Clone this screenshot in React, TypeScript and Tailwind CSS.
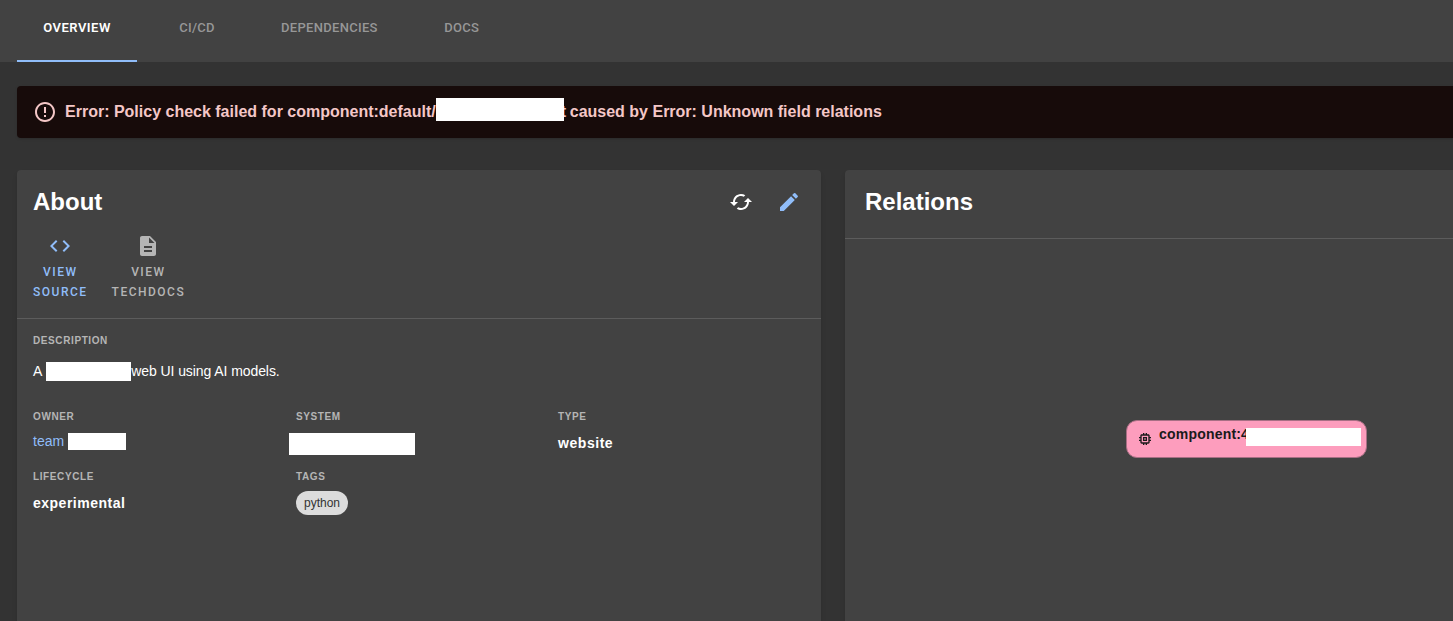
const Icon = ({ d, className }: { d: string; className: string }) => (
  <svg viewBox="0 0 24 24" className={className} fill="currentColor" aria-hidden="true">
    <path d={d} />
  </svg>
);

const Redact = ({ className }: { className: string }) => <span className={`block relative z-10 bg-white ${className}`} />;

const Label = ({ children }: { children: React.ReactNode }) => (
  <div className="text-[10px] leading-[16px] font-bold tracking-[0.6px] text-[#b5b5b5] uppercase">{children}</div>
);

const tabs = ["OVERVIEW", "CI/CD", "DEPENDENCIES", "DOCS"];

export default function App() {
  return (
    <div className="w-[1453px] h-[621px] overflow-hidden bg-[#333333] font-['Liberation_Sans',sans-serif] text-white">
      <div className="w-[1666px]">
        <div className="h-[62px] bg-[#424242] px-[17px] flex">
          {tabs.map((t, i) => (
            <div
              key={t}
              className={`min-w-[120px] px-6 h-[62px] flex items-center justify-center pb-[4px] font-['Roboto',sans-serif] text-[13px] border-b-2 ${
                i === 0
                  ? "border-[#90bdf9] text-white font-semibold tracking-[0.5px]"
                  : "border-transparent text-[#979797] font-medium tracking-[0.3px]"
              }`}
            >
              {t}
            </div>
          ))}
        </div>

        <div className="px-[17px] pt-6">
          <div className="h-[52px] rounded bg-[#170b0a] flex items-center pl-4 text-[#f4c7c7] shadow-sm">
            <Icon
              className="w-[24px] h-[24px] text-[#f4c7c7] mr-[8px]"
              d="M11 15h2v2h-2zm0-8h2v6h-2zm.99-5C6.47 2 2 6.48 2 12s4.47 10 9.99 10C17.52 22 22 17.52 22 12S17.52 2 11.99 2zM12 20c-4.42 0-8-3.58-8-8s3.58-8 8-8 8 3.58 8 8-3.58 8-8 8z"
            />
            <span className="text-[16px] font-bold leading-6">Error: Policy check failed for component:default/</span>
            <Redact className="w-[128px] h-[23px] -mt-[5px]" />
            <span className="text-[16px] font-bold leading-6 -ml-[3px]">t</span>
            <span className="text-[16px] font-bold leading-6 ml-[3.7px]">caused by Error: Unknown field relations</span>
          </div>

          <div className="mt-8 grid grid-cols-[804px_804px] gap-6">
            <div className="h-[460px] rounded bg-[#424242] shadow-md">
              <div className="h-[149px] border-b border-[#5c5c5c]">
                <div className="flex items-start justify-between pl-4 pr-[20px] pt-[16px]">
                  <h2 className="text-[24px] font-bold leading-8">About</h2>
                  <div className="flex items-center gap-[24px] pt-[4px]">
                    <Icon
                      className="w-6 h-6 text-white"
                      d="M19 8l-4 4h3c0 3.31-2.69 6-6 6-1.01 0-1.97-.25-2.8-.7l-1.46 1.46C8.97 19.54 10.43 20 12 20c4.42 0 8-3.58 8-8h3l-4-4zM6 12c0-3.31 2.69-6 6-6 1.01 0 1.97.25 2.8.7l1.46-1.46C15.03 4.46 13.57 4 12 4c-4.42 0-8 3.58-8 8H1l4 4 4-4H6z"
                    />
                    <Icon
                      className="w-6 h-6 text-[#90bdf9]"
                      d="M3 17.25V21h3.75L17.81 9.94l-3.75-3.75L3 17.25zM20.71 7.04c.39-.39.39-1.02 0-1.41l-2.34-2.34a.9959.9959 0 0 0-1.41 0l-1.83 1.83 3.75 3.75 1.83-1.83z"
                    />
                  </div>
                </div>
                <div className="flex pl-4 gap-6 mt-[16px] font-['Roboto',sans-serif] text-[12px] font-medium tracking-[1.5px] leading-[20px] text-center">
                  <div className="flex flex-col items-center text-[#90bdf9]">
                    <Icon
                      className="w-6 h-6 mb-[4px]"
                      d="M9.4 16.6L4.8 12l4.6-4.6L8 6l-6 6 6 6 1.4-1.4zm5.2 0l4.6-4.6-4.6-4.6L16 6l6 6-6 6-1.4-1.4z"
                    />
                    <span>VIEW</span>
                    <span>SOURCE</span>
                  </div>
                  <div className="flex flex-col items-center text-[#b5b5b5]">
                    <Icon
                      className="w-6 h-6 mb-[4px]"
                      d="M14 2H6c-1.1 0-1.99.9-1.99 2L4 20c0 1.1.89 2 1.99 2H18c1.1 0 2-.9 2-2V8l-6-6zm2 16H8v-2h8v2zm0-4H8v-2h8v2zm-3-5V3.5L18.5 9H13z"
                    />
                    <span>VIEW</span>
                    <span>TECHDOCS</span>
                  </div>
                </div>
              </div>

              <div className="px-4 pt-[14px]">
                <Label>DESCRIPTION</Label>
                <div className="mt-[12px] flex items-center h-[20px] text-[14px] leading-5 tracking-[-0.08px]">
                  <span>A</span>
                  <Redact className="ml-[4px] w-[85px] h-[19px]" />
                  <span>web UI using AI models.</span>
                </div>

                <div className="mt-[28px] grid grid-cols-[263px_262px_1fr]">
                  <div className="h-[60px]">
                    <Label>OWNER</Label>
                    <div className="mt-[8px] flex items-center h-[17px] text-[14px] text-[#90bdf9]">
                      <span>team</span>
                      <Redact className="ml-[4px] w-[58px] h-[17px]" />
                    </div>
                  </div>
                  <div className="h-[60px]">
                    <Label>SYSTEM</Label>
                    <Redact className="mt-[8px] -ml-[7px] w-[126px] h-[22px]" />
                  </div>
                  <div className="h-[60px]">
                    <Label>TYPE</Label>
                    <div className="mt-[8px] text-[14px] font-bold leading-[20px] tracking-[0.55px]">website</div>
                  </div>
                  <div>
                    <Label>LIFECYCLE</Label>
                    <div className="mt-[8px] text-[14px] font-bold leading-[20px] tracking-[0.5px]">experimental</div>
                  </div>
                  <div>
                    <Label>TAGS</Label>
                    <span className="mt-[6px] inline-flex items-center h-6 px-[8px] rounded-full bg-[#dcdcdc] text-[#333333] text-[12px]">
                      python
                    </span>
                  </div>
                </div>
              </div>
            </div>

            <div className="h-[460px] rounded bg-[#424242] shadow-md">
              <div className="h-[69px] border-b border-[#5c5c5c] px-5 pt-4">
                <h2 className="text-[24px] font-bold leading-8">Relations</h2>
              </div>
              <div className="pl-[281px] pt-[181px]">
                <div className="w-[241px] h-[38px] rounded-[11px] bg-[#fd9dbd] border border-[#a86f84] flex text-[#1a1a1a]">
                  <Icon
                    className="w-[16px] h-[16px] ml-[10px] mt-[10px]"
                    d="M15 9H9v6h6V9zm-2 4h-2v-2h2v2zm8-2V9h-2V7c0-1.1-.9-2-2-2h-2V3h-2v2h-2V3H9v2H7c-1.1 0-2 .9-2 2v2H3v2h2v2H3v2h2v2c0 1.1.9 2 2 2h2v2h2v-2h2v2h2v-2h2c1.1 0 2-.9 2-2v-2h2v-2h-2v-2h2zm-4 6H7V7h10v10z"
                  />
                  <span className="ml-[6px] mt-[3px] text-[14px] font-bold leading-5 whitespace-nowrap tracking-[0.2px]">
                    component:4
                  </span>
                  <Redact className="mt-[7px] -ml-[3px] w-[115px] h-[18px]" />
                </div>
              </div>
            </div>
          </div>
        </div>
      </div>
    </div>
  );
}
